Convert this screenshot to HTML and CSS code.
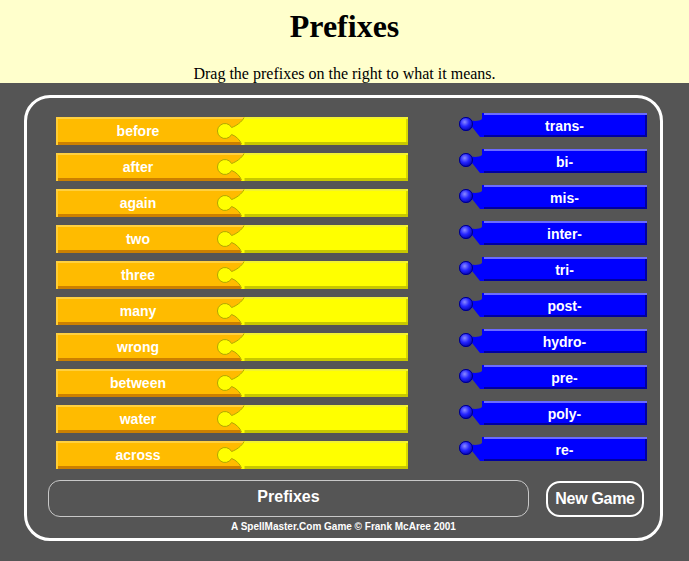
FILE: index.html
```html
<!DOCTYPE html>
<html>
<head>
<meta charset="utf-8">
<link rel="stylesheet" href="styles.css">
</head>
<body>
<div class="header">
  <h1 class="title">Prefixes</h1>
  <p class="sub">Drag the prefixes on the right to what it means.</p>
</div>
<div class="frame">
  <svg class="defs" width="0" height="0"><defs><radialGradient id="bg" cx="0.4" cy="0.35" r="0.7"><stop offset="0" stop-color="#8a8aff"/><stop offset="0.5" stop-color="#2525ff"/><stop offset="1" stop-color="#0000b0"/></radialGradient><radialGradient id="yg" cx="0.35" cy="0.3" r="0.7"><stop offset="0" stop-color="#ffffa0"/><stop offset="0.5" stop-color="#ffff00"/><stop offset="1" stop-color="#e8e800"/></radialGradient></defs></svg>
  <div class="board">
    <div class="slots">
      <div class="slot"><div class="word">before</div><div class="target"><svg class="knob" viewBox="0 0 30 28"><path class="kfill" d="M28.5,0 L28,0 C26,5 20,9 15.6,10.5 A7.5,7.5 0 1 0 15.6,17.5 C20,19 24,23 25.5,28 L28.5,28 Z"/><path class="kline" d="M28,0.5 C26,5 20,9 15.6,10.5 A7.5,7.5 0 1 0 15.6,17.5 C20,19 24,23 25.5,27"/></svg></div></div>
      <div class="slot"><div class="word">after</div><div class="target"><svg class="knob" viewBox="0 0 30 28"><path class="kfill" d="M28.5,0 L28,0 C26,5 20,9 15.6,10.5 A7.5,7.5 0 1 0 15.6,17.5 C20,19 24,23 25.5,28 L28.5,28 Z"/><path class="kline" d="M28,0.5 C26,5 20,9 15.6,10.5 A7.5,7.5 0 1 0 15.6,17.5 C20,19 24,23 25.5,27"/></svg></div></div>
      <div class="slot"><div class="word">again</div><div class="target"><svg class="knob" viewBox="0 0 30 28"><path class="kfill" d="M28.5,0 L28,0 C26,5 20,9 15.6,10.5 A7.5,7.5 0 1 0 15.6,17.5 C20,19 24,23 25.5,28 L28.5,28 Z"/><path class="kline" d="M28,0.5 C26,5 20,9 15.6,10.5 A7.5,7.5 0 1 0 15.6,17.5 C20,19 24,23 25.5,27"/></svg></div></div>
      <div class="slot"><div class="word">two</div><div class="target"><svg class="knob" viewBox="0 0 30 28"><path class="kfill" d="M28.5,0 L28,0 C26,5 20,9 15.6,10.5 A7.5,7.5 0 1 0 15.6,17.5 C20,19 24,23 25.5,28 L28.5,28 Z"/><path class="kline" d="M28,0.5 C26,5 20,9 15.6,10.5 A7.5,7.5 0 1 0 15.6,17.5 C20,19 24,23 25.5,27"/></svg></div></div>
      <div class="slot"><div class="word">three</div><div class="target"><svg class="knob" viewBox="0 0 30 28"><path class="kfill" d="M28.5,0 L28,0 C26,5 20,9 15.6,10.5 A7.5,7.5 0 1 0 15.6,17.5 C20,19 24,23 25.5,28 L28.5,28 Z"/><path class="kline" d="M28,0.5 C26,5 20,9 15.6,10.5 A7.5,7.5 0 1 0 15.6,17.5 C20,19 24,23 25.5,27"/></svg></div></div>
      <div class="slot"><div class="word">many</div><div class="target"><svg class="knob" viewBox="0 0 30 28"><path class="kfill" d="M28.5,0 L28,0 C26,5 20,9 15.6,10.5 A7.5,7.5 0 1 0 15.6,17.5 C20,19 24,23 25.5,28 L28.5,28 Z"/><path class="kline" d="M28,0.5 C26,5 20,9 15.6,10.5 A7.5,7.5 0 1 0 15.6,17.5 C20,19 24,23 25.5,27"/></svg></div></div>
      <div class="slot"><div class="word">wrong</div><div class="target"><svg class="knob" viewBox="0 0 30 28"><path class="kfill" d="M28.5,0 L28,0 C26,5 20,9 15.6,10.5 A7.5,7.5 0 1 0 15.6,17.5 C20,19 24,23 25.5,28 L28.5,28 Z"/><path class="kline" d="M28,0.5 C26,5 20,9 15.6,10.5 A7.5,7.5 0 1 0 15.6,17.5 C20,19 24,23 25.5,27"/></svg></div></div>
      <div class="slot"><div class="word">between</div><div class="target"><svg class="knob" viewBox="0 0 30 28"><path class="kfill" d="M28.5,0 L28,0 C26,5 20,9 15.6,10.5 A7.5,7.5 0 1 0 15.6,17.5 C20,19 24,23 25.5,28 L28.5,28 Z"/><path class="kline" d="M28,0.5 C26,5 20,9 15.6,10.5 A7.5,7.5 0 1 0 15.6,17.5 C20,19 24,23 25.5,27"/></svg></div></div>
      <div class="slot"><div class="word">water</div><div class="target"><svg class="knob" viewBox="0 0 30 28"><path class="kfill" d="M28.5,0 L28,0 C26,5 20,9 15.6,10.5 A7.5,7.5 0 1 0 15.6,17.5 C20,19 24,23 25.5,28 L28.5,28 Z"/><path class="kline" d="M28,0.5 C26,5 20,9 15.6,10.5 A7.5,7.5 0 1 0 15.6,17.5 C20,19 24,23 25.5,27"/></svg></div></div>
      <div class="slot"><div class="word">across</div><div class="target"><svg class="knob" viewBox="0 0 30 28"><path class="kfill" d="M28.5,0 L28,0 C26,5 20,9 15.6,10.5 A7.5,7.5 0 1 0 15.6,17.5 C20,19 24,23 25.5,28 L28.5,28 Z"/><path class="kline" d="M28,0.5 C26,5 20,9 15.6,10.5 A7.5,7.5 0 1 0 15.6,17.5 C20,19 24,23 25.5,27"/></svg></div></div>
    </div>
    <div class="tiles">
      <div class="tile"><svg class="tknob" viewBox="0 0 26 24"><path class="tfill" d="M26,0 L24,0 L24,6 C22,8 18,8 14.3,7.8 A7,7 0 1 0 14.3,14.2 L22,24 L26,24 Z"/><circle cx="8" cy="11" r="6.5" fill="url(#bg)" class="tcirc"/></svg><div class="tbody">trans-</div></div>
      <div class="tile"><svg class="tknob" viewBox="0 0 26 24"><path class="tfill" d="M26,0 L24,0 L24,6 C22,8 18,8 14.3,7.8 A7,7 0 1 0 14.3,14.2 L22,24 L26,24 Z"/><circle cx="8" cy="11" r="6.5" fill="url(#bg)" class="tcirc"/></svg><div class="tbody">bi-</div></div>
      <div class="tile"><svg class="tknob" viewBox="0 0 26 24"><path class="tfill" d="M26,0 L24,0 L24,6 C22,8 18,8 14.3,7.8 A7,7 0 1 0 14.3,14.2 L22,24 L26,24 Z"/><circle cx="8" cy="11" r="6.5" fill="url(#bg)" class="tcirc"/></svg><div class="tbody">mis-</div></div>
      <div class="tile"><svg class="tknob" viewBox="0 0 26 24"><path class="tfill" d="M26,0 L24,0 L24,6 C22,8 18,8 14.3,7.8 A7,7 0 1 0 14.3,14.2 L22,24 L26,24 Z"/><circle cx="8" cy="11" r="6.5" fill="url(#bg)" class="tcirc"/></svg><div class="tbody">inter-</div></div>
      <div class="tile"><svg class="tknob" viewBox="0 0 26 24"><path class="tfill" d="M26,0 L24,0 L24,6 C22,8 18,8 14.3,7.8 A7,7 0 1 0 14.3,14.2 L22,24 L26,24 Z"/><circle cx="8" cy="11" r="6.5" fill="url(#bg)" class="tcirc"/></svg><div class="tbody">tri-</div></div>
      <div class="tile"><svg class="tknob" viewBox="0 0 26 24"><path class="tfill" d="M26,0 L24,0 L24,6 C22,8 18,8 14.3,7.8 A7,7 0 1 0 14.3,14.2 L22,24 L26,24 Z"/><circle cx="8" cy="11" r="6.5" fill="url(#bg)" class="tcirc"/></svg><div class="tbody">post-</div></div>
      <div class="tile"><svg class="tknob" viewBox="0 0 26 24"><path class="tfill" d="M26,0 L24,0 L24,6 C22,8 18,8 14.3,7.8 A7,7 0 1 0 14.3,14.2 L22,24 L26,24 Z"/><circle cx="8" cy="11" r="6.5" fill="url(#bg)" class="tcirc"/></svg><div class="tbody">hydro-</div></div>
      <div class="tile"><svg class="tknob" viewBox="0 0 26 24"><path class="tfill" d="M26,0 L24,0 L24,6 C22,8 18,8 14.3,7.8 A7,7 0 1 0 14.3,14.2 L22,24 L26,24 Z"/><circle cx="8" cy="11" r="6.5" fill="url(#bg)" class="tcirc"/></svg><div class="tbody">pre-</div></div>
      <div class="tile"><svg class="tknob" viewBox="0 0 26 24"><path class="tfill" d="M26,0 L24,0 L24,6 C22,8 18,8 14.3,7.8 A7,7 0 1 0 14.3,14.2 L22,24 L26,24 Z"/><circle cx="8" cy="11" r="6.5" fill="url(#bg)" class="tcirc"/></svg><div class="tbody">poly-</div></div>
      <div class="tile"><svg class="tknob" viewBox="0 0 26 24"><path class="tfill" d="M26,0 L24,0 L24,6 C22,8 18,8 14.3,7.8 A7,7 0 1 0 14.3,14.2 L22,24 L26,24 Z"/><circle cx="8" cy="11" r="6.5" fill="url(#bg)" class="tcirc"/></svg><div class="tbody">re-</div></div>
    </div>
  </div>
  <div class="bottom">
    <div class="caption">Prefixes</div>
    <div class="newgame">New Game</div>
  </div>
  <div class="credit">A SpellMaster.Com Game © Frank McAree 2001</div>
</div>
</body>
</html>
```

FILE: styles.css
```css
html, body {
  margin: 0;
  padding: 0;
}
body {
  background: #555555;
  width: 689px;
  height: 561px;
  overflow: hidden;
}
.header {
  background: #ffffcc;
  height: 83px;
  text-align: center;
  font-family: "Liberation Serif", "Times New Roman", serif;
  color: #000;
  overflow: hidden;
}
.title {
  margin: 0;
  padding-top: 8px;
  font-size: 32px;
  line-height: 36px;
  font-weight: bold;
}
.sub {
  margin: 21px 0 0;
  font-size: 16px;
  line-height: 18px;
}
.frame {
  box-sizing: border-box;
  margin: 12px 0 0 24px;
  width: 639px;
  height: 446px;
  border: 3px solid #ffffff;
  border-radius: 26px;
  padding-top: 15px;
  font-family: "Liberation Sans", Arial, sans-serif;
  color: #fff;
}
.defs {
  position: absolute;
  width: 0;
  height: 0;
}
.board {
  display: flex;
  align-items: flex-start;
}
.slots {
  margin-left: 29px;
  padding-top: 4px;
  display: flex;
  flex-direction: column;
  gap: 8px;
}
.slot {
  display: flex;
  width: 352px;
  height: 28px;
}
.word {
  width: 188px;
  padding-right: 24px;
  box-sizing: border-box;
  background: #ffbb00;
  box-shadow: inset 0 2px 0 #ffd040, inset 2px 0 0 #ffcc33, inset 0 -3px 0 #cc8000;
  font-weight: bold;
  font-size: 14px;
  line-height: 28px;
  text-align: center;
}
.target {
  position: relative;
  flex: 1;
  background: #ffff00;
  box-shadow: inset 0 2px 0 #f2f230, inset 0 -3px 0 #c8c800, inset -2px 0 0 #d8d800;
}
.knob {
  position: absolute;
  left: -28px;
  top: 0;
  width: 30px;
  height: 28px;
  overflow: visible;
}
.kfill {
  fill: #ffff00;
}
.kline {
  fill: none;
  stroke: #b0a800;
  stroke-width: 1;
}
.tiles {
  margin-left: 50px;
  display: flex;
  flex-direction: column;
  gap: 12px;
}
.tile {
  position: relative;
  width: 189px;
  height: 24px;
  display: flex;
}
.tknob {
  position: absolute;
  left: 0;
  top: 0;
  width: 26px;
  height: 24px;
  overflow: visible;
}
.tfill {
  fill: #0000ff;
}
.tcirc {
  stroke: #00007a;
  stroke-width: 1;
}
.tbody {
  margin-left: 24px;
  flex: 1;
  height: 24px;
  padding-top: 2px;
  box-sizing: border-box;
  background: #0000ff;
  box-shadow: inset 0 2px 0 #6b6bff, inset -2px 0 0 #0000a0, inset 0 -2px 0 #0000a0;
  font-weight: bold;
  font-size: 14px;
  line-height: 22px;
  text-align: center;
}
.bottom {
  display: flex;
  align-items: center;
  margin-top: 11px;
  padding-left: 21px;
  gap: 17px;
}
.caption {
  box-sizing: border-box;
  width: 481px;
  height: 37px;
  border: 1px solid #c8c8c8;
  border-radius: 12px;
  font-weight: bold;
  font-size: 16px;
  line-height: 31px;
  text-align: center;
}
.newgame {
  box-sizing: border-box;
  width: 98px;
  height: 36px;
  border: 2px solid #ffffff;
  border-radius: 14px;
  font-weight: bold;
  font-size: 16px;
  line-height: 31px;
  text-align: center;
  letter-spacing: -0.3px;
}
.credit {
  margin-top: 3px;
  font-size: 10px;
  line-height: 14px;
  font-weight: bold;
  text-align: center;
}
```
